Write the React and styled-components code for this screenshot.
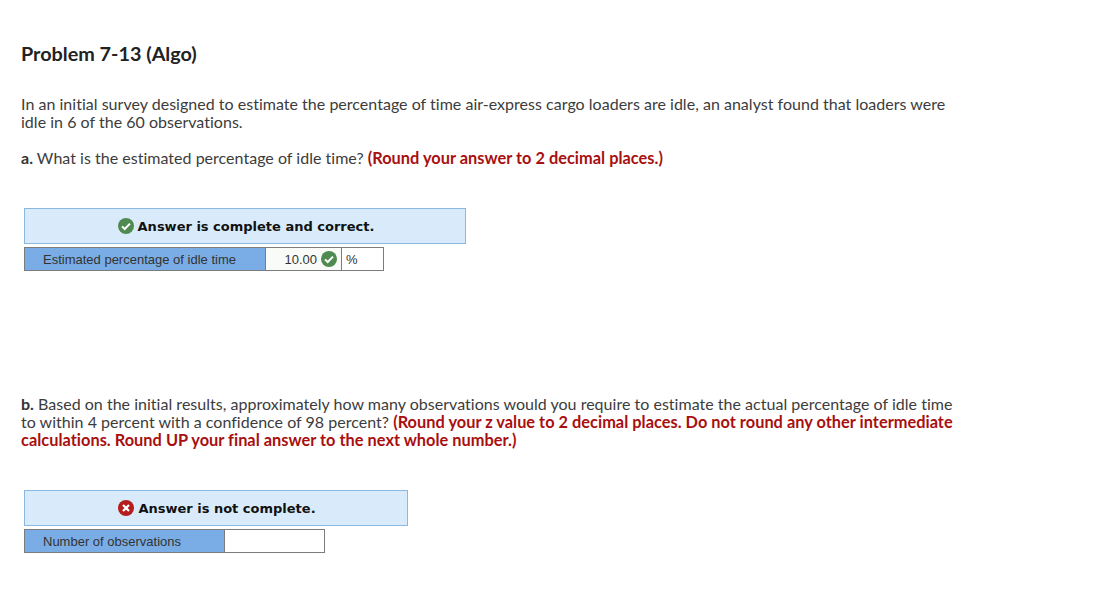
import React from "react";
import styled, { createGlobalStyle } from "styled-components";

const GlobalStyle = createGlobalStyle`
  body {
    margin: 0;
    background: #fff;
  }
`;

const Page = styled.div`
  width: 1093px;
  height: 610px;
  box-sizing: border-box;
  padding: 42px 0 0 21px;
  overflow: hidden;
  font-family: Lato, "Open Sans", sans-serif;
  color: #333;
`;
const Title = styled.h2`
  margin: 0 0 30px;
  font-size: 19.8px;
  line-height: 23px;
  font-weight: 700;
  color: #222;
`;
const Text = styled.p`
  margin: 0 0 18px;
  width: 935px;
  font-size: 16px;
  line-height: 18px;
  letter-spacing: 0.02px;
  color: #3c3c3c;
`;
const Part = styled.b`
  color: #333;
`;
const Hint = styled.b`
  font-size: 16.35px;
  color: #a80f0f;
`;
const Answer = styled.div`
  margin: ${(p) => p.$top}px 0 ${(p) => p.$bottom}px 3px;
  width: ${(p) => p.$width}px;
`;
const Banner = styled.div`
  box-sizing: border-box;
  height: 36px;
  padding-left: 2px;
  display: flex;
  align-items: center;
  justify-content: center;
  gap: 4px;
  border: 1px solid #8ab8df;
  background: #d9ebfa;
  font-family: "DejaVu Sans", Verdana, sans-serif;
  font-size: 13px;
  font-weight: 700;
  color: #111;
`;
const Row = styled.div`
  box-sizing: border-box;
  display: flex;
  align-items: stretch;
  width: ${(p) => p.$width}px;
  height: 24px;
  margin: 3px 0 0 0;
  border: 1px solid #7c7c7c;
  font-family: "Liberation Sans", Arial, sans-serif;
  font-size: 13px;
  color: #333;
`;
const Label = styled.div`
  width: ${(p) => p.$width}px;
  box-sizing: border-box;
  padding-left: 18px;
  display: flex;
  align-items: center;
  background: #7aade5;
  border-right: 1px solid #7c7c7c;
`;
const Value = styled.div`
  box-sizing: border-box;
  width: 76px;
  padding-right: 4px;
  display: flex;
  align-items: center;
  justify-content: flex-end;
  gap: 4px;
  background: #f8fbf8;
  border-right: 1px solid #7c7c7c;
`;
const Unit = styled.div`
  flex: 1;
  padding-left: 4px;
  display: flex;
  align-items: center;
`;
const Blank = styled.div`
  flex: 1;
  background: #fff;
`;

const CheckIcon = ({ size = 16 }) => (
  <svg width={size} height={size} viewBox="0 0 16 16">
    <circle cx="8" cy="8" r="8" fill="#4f8a50" />
    <path d="M4 8.4l2.7 2.6L12 5.6" fill="none" stroke="#fff" strokeWidth="2" />
  </svg>
);

const CrossIcon = () => (
  <svg width="16" height="16" viewBox="0 0 16 16">
    <circle cx="8" cy="8" r="8" fill="#b51c1c" />
    <path d="M5 5l6 6M11 5l-6 6" fill="none" stroke="#fff" strokeWidth="2.2" />
  </svg>
);

const App = () => {
  return (
    <Page>
      <GlobalStyle />
      <Title>Problem 7-13 (Algo)</Title>
      <Text>
        In an initial survey designed to estimate the percentage of time air-express cargo loaders are idle, an analyst
        found that loaders were idle in 6 of the 60 observations.
      </Text>
      <Text>
        <Part>a.</Part> What is the estimated percentage of idle time?{" "}
        <Hint>(Round your answer to 2 decimal places.)</Hint>
      </Text>
      <Answer $top={41} $bottom={124} $width={442}>
        <Banner>
          <CheckIcon />
          Answer is complete and correct.
        </Banner>
        <Row $width={360}>
          <Label $width={241}>Estimated percentage of idle time</Label>
          <Value>
            10.00
            <CheckIcon />
          </Value>
          <Unit>%</Unit>
        </Row>
      </Answer>
      <Text>
        <Part>b.</Part> Based on the initial results, approximately how many observations would you require to estimate
        the actual percentage of idle time to within 4 percent with a confidence of 98 percent?{" "}
        <Hint>
          (Round your z value to 2 decimal places. Do not round any other intermediate calculations. Round UP your final
          answer to the next whole number.)
        </Hint>
      </Text>
      <Answer $top={41} $bottom={0} $width={384}>
        <Banner>
          <CrossIcon />
          Answer is not complete.
        </Banner>
        <Row $width={301}>
          <Label $width={200}>Number of observations</Label>
          <Blank />
        </Row>
      </Answer>
    </Page>
  );
};

export default App;
